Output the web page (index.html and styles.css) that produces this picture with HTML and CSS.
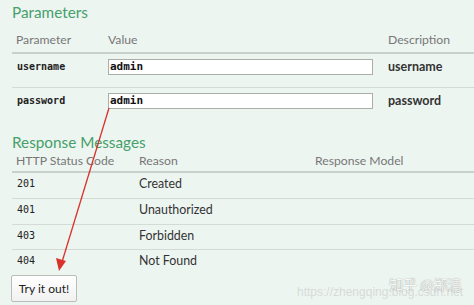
FILE: index.html
```html
<!DOCTYPE html>
<html>
<head>
<meta charset="utf-8">
<link rel="stylesheet" href="styles.css">
</head>
<body>
<div class="page">
  <h3 class="title">Parameters</h3>
  <table class="params">
    <colgroup><col class="pc1"><col class="pc2"><col class="pc3"></colgroup>
    <thead>
      <tr><th>Parameter</th><th class="vh">Value</th><th>Description</th></tr>
    </thead>
    <tbody>
      <tr class="sep"><td class="code">username</td><td class="vc"><div class="input">admin</div></td><td class="desc">username</td></tr>
      <tr><td class="code">password</td><td class="vc"><div class="input">admin</div></td><td class="desc">password</td></tr>
    </tbody>
  </table>
  <h3 class="title title2">Response Messages</h3>
  <table class="resp">
    <colgroup><col class="rc1"><col class="rc2"><col class="rc3"></colgroup>
    <thead>
      <tr><th>HTTP Status Code</th><th>Reason</th><th>Response Model</th></tr>
    </thead>
    <tbody>
      <tr class="sep r26"><td class="num">201</td><td>Created</td><td></td></tr>
      <tr class="sep r26"><td class="num">401</td><td>Unauthorized</td><td></td></tr>
      <tr class="sep r25"><td class="num">403</td><td>Forbidden</td><td></td></tr>
      <tr class="r26"><td class="num">404</td><td>Not Found</td><td></td></tr>
    </tbody>
  </table>
  <div class="actions"><button class="btn">Try it out!</button></div>

  <svg class="arrow" width="474" height="305" viewBox="0 0 474 305">
    <line x1="109" y1="108" x2="62" y2="262" stroke="#d8322c" stroke-width="1.3"/>
    <polygon points="59,271 56,258 66,261" fill="#d8322c"/>
  </svg>
  <div class="wm-url">https://zhengqing.blog.csdn.net</div>
  <div class="wm">知乎 @郑清</div>
</div>
</body>
</html>
```
FILE: styles.css
```css
html, body {
  margin: 0;
  padding: 0;
}
body {
  background: #edf5f1;
  font-family: Lato, "Open Sans", sans-serif;
  color: #333;
  width: 474px;
  height: 305px;
  overflow: hidden;
}
.page {
  position: relative;
  padding-left: 12px;
  height: 305px;
}
.title {
  margin: 0;
  font-weight: normal;
  font-size: 15.3px;
  color: #45a06b;
  height: 27px;
  line-height: 25px;
}
.title2 {
  height: 22px;
  line-height: 28px;
  margin-top: 7px;
}
table {
  border-collapse: collapse;
  table-layout: fixed;
  width: 462px;
}
th {
  font-weight: normal;
  font-size: 12.2px;
  color: #777;
  text-align: left;
  padding: 0 0 0 4px;
  border-bottom: 2px solid #c9d1cd;
}
td {
  padding: 0 0 0 4px;
  font-size: 12.4px;
  color: #333;
  vertical-align: middle;
}
.params th { height: 25px; }
.params tbody tr { height: 34px; }
.params tr.sep td { border-bottom: 1px solid #d3dbd7; }
.pc1 { width: 92px; }
.pc2 { width: 280px; }
.pc3 { width: 90px; }
.code {
  font-family: "DejaVu Sans Mono", monospace;
  font-weight: bold;
  font-size: 10px;
  color: #222;
  padding-left: 5px;
  padding-bottom: 8px;
}
.desc {
  font-weight: bold;
  font-size: 12.5px;
  color: #333;
  padding-bottom: 7px;
}
.input {
  box-sizing: border-box;
  width: 265px;
  height: 16px;
  background: #fff;
  border: 1px solid #a9aeab;
  font-family: "DejaVu Sans Mono", monospace;
  font-weight: bold;
  font-size: 11px;
  line-height: 14px;
  padding-left: 1px;
  color: #111;
  margin-bottom: 6px;
}
.rc1 { width: 123px; }
.rc2 { width: 176px; }
.rc3 { width: 163px; }
.resp th { height: 21px; }
.resp tr.r26 { height: 26px; }
.resp tr.r25 { height: 25px; }
.resp td { padding-bottom: 3px; }
.resp tr.sep td { border-bottom: 1px solid #d3dbd7; }
.num {
  font-family: "DejaVu Sans Mono", monospace;
  font-size: 10px;
  color: #222;
  padding-left: 5px;
}
.actions {
  margin-top: 0;
}
.btn {
  margin-left: -1px;
  width: 66px;
  height: 27px;
  background: linear-gradient(#ffffff, #f1f1f1);
  border: 1px solid #b9bdbb;
  border-radius: 2px;
  font-family: Lato, sans-serif;
  font-size: 12px;
  color: #222;
  padding: 0;
}
.arrow {
  position: absolute;
  left: 0;
  top: 0;
  pointer-events: none;
}
.wm {
  position: absolute;
  left: 389px;
  top: 274px;
  font-family: "Noto Sans CJK SC", sans-serif;
  font-size: 14px;
  line-height: 20px;
  color: rgba(255,255,255,0.95);
  text-shadow: 0 0 1px rgba(90,90,90,0.8);
}
.wm-url {
  position: absolute;
  left: 297px;
  top: 285px;
  font-family: "Liberation Sans", sans-serif;
  font-size: 12px;
  line-height: 14px;
  color: rgba(205,210,207,0.75);
}
```
